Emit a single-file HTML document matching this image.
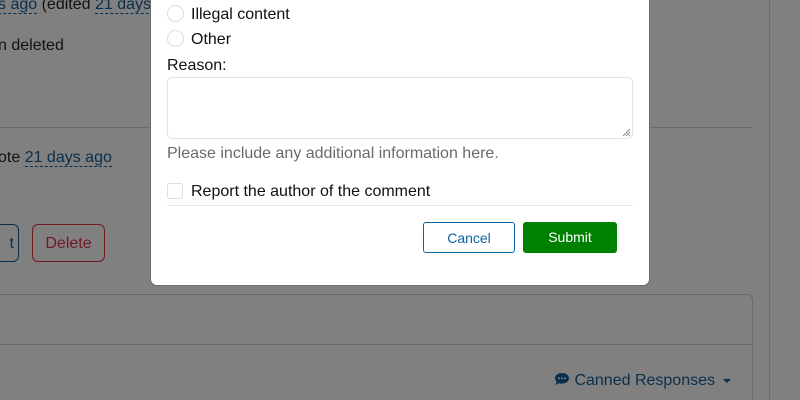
<!DOCTYPE html>
<html><head><meta charset="utf-8"><style>
*{box-sizing:border-box;margin:0;padding:0}
html,body{width:800px;height:400px;overflow:hidden}
body{background:#808080;font-family:"Liberation Sans",sans-serif;font-size:16px;color:#111;position:relative}
.a{position:absolute;white-space:nowrap}
.lk{color:#08304c;border-bottom:1px dashed #08304c}
.hl{position:absolute;height:1px;background:#6a6a6a}
.modal{position:absolute;left:151px;top:-10px;width:498px;height:295px;background:#fff;border-radius:6px;box-shadow:0 0 0 1px #6e6e6e}
.radio{position:absolute;width:17px;height:17px;border:1px solid #ddd;border-radius:50%}
.btn{position:absolute;height:31px;border-radius:3px;font-size:14px;text-align:center;line-height:29px}
</style></head><body>
<div class="a" style="left:-2px;top:-5px;line-height:20px"><span class="lk">s ago</span> (edited <span class="lk">21 days a</span></div>
<div class="a" style="left:-2px;top:37px">n deleted</div>
<div class="hl" style="left:0;top:127px;width:752px"></div>
<div class="a" style="left:-2px;top:149px">ote <span class="lk">21 days ago</span></div>
<div class="a" style="left:-20px;top:224px;width:39px;height:38px;border:1px solid #08304c;border-radius:6px;color:#08304c;line-height:38px;text-align:right;padding-right:4px">t</div>
<div class="a" style="left:32px;top:224px;width:73px;height:38px;border:1px solid #701a22;border-radius:6px;color:#701a22;line-height:38px;text-align:center">Delete</div>
<div class="a" style="left:-10px;top:294px;width:763px;height:110px;border:1px solid #6a6a6a;border-radius:6px"></div>
<div class="hl" style="left:0;top:344px;width:752px"></div>
<div class="hl" style="left:769px;top:0;width:1px;height:400px"></div>
<div class="a" style="left:554px;top:372px;color:#08304c">
<svg width="16" height="14" viewBox="0 0 16 14" style="vertical-align:-1px"><path d="M8 1C3.8 1 1 3.4 1 6.3c0 1.3.6 2.5 1.6 3.4L1.5 13l3.6-1.8c.9.3 1.9.4 2.9.4 4.2 0 7-2.4 7-5.3S12.2 1 8 1z" fill="#08304c"/><circle cx="5" cy="6.3" r="1" fill="#808080"/><circle cx="8" cy="6.3" r="1" fill="#808080"/><circle cx="11" cy="6.3" r="1" fill="#808080"/></svg> Canned Responses <svg width="10" height="8" viewBox="0 0 10 8" style="margin-left:3px"><path d="M1 2h8L5 6z" fill="#08304c"/></svg></div>
<div class="modal"></div>
<div class="radio" style="left:167px;top:5px"></div>
<div class="a" style="left:191px;top:6px">Illegal content</div>
<div class="radio" style="left:167px;top:30px"></div>
<div class="a" style="left:191px;top:31px">Other</div>
<div class="a" style="left:167px;top:57px">Reason:</div>
<div class="a" style="left:167px;top:77px;width:466px;height:62px;border:1px solid #e2e2e2;border-radius:5px">
<svg width="10" height="10" style="position:absolute;right:1px;bottom:1px" viewBox="0 0 10 10"><path d="M9 2L2 9M9 5L5 9M9 8L8 9" stroke="#888" stroke-width="1"/></svg></div>
<div class="a" style="left:167px;top:145px;color:#6a6a6a">Please include any additional information here.</div>
<div class="a" style="left:167px;top:183px;width:16px;height:16px;border:1px solid #ddd;border-radius:3px"></div>
<div class="a" style="left:191px;top:183px">Report the author of the comment</div>
<div class="hl" style="left:167px;top:205px;width:466px;background:#e6e6e6"></div>
<div class="btn" style="left:423px;top:222px;width:92px;border:1px solid #0a66a0;color:#0a66a0;line-height:31px">Cancel</div>
<div class="btn" style="left:523px;top:222px;width:94px;background:#008000;color:#fff;line-height:31px">Submit</div>
</body></html>
